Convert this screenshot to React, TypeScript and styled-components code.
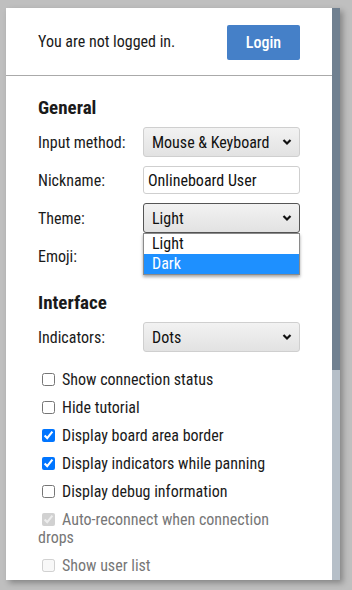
import * as React from 'react';
import styled, { createGlobalStyle } from 'styled-components';

const GlobalStyle = createGlobalStyle`
	html, body {
		margin: 0;
		padding: 0;
		background-color: #bfbfbf;
	}
	body {
		font-family: "Roboto Condensed", "Liberation Sans Narrow", Roboto, sans-serif;
		font-stretch: condensed;
		font-size: 16px;
		color: #1a1a1a;
	}
`;

const Page = styled.div`
	width: 352px;
	height: 590px;
	padding: 8px 12px 10px 6px;
	box-sizing: border-box;
`;

const Panel = styled.div`
	display: flex;
	width: 334px;
	height: 572px;
	background-color: #ffffff;
	box-shadow: 3px 3px 6px rgba(0, 0, 0, 0.3);
`;

const Content = styled.div`
	flex: 1;
	overflow: hidden;
	position: relative;
`;

const ScrollTrack = styled.div`
	width: 8px;
	background-color: #b6bfc8;
`;

const ScrollThumb = styled.div`
	height: 362px;
	background-color: #708090;
`;

const Header = styled.div`
	display: flex;
	align-items: center;
	justify-content: space-between;
	height: 67px;
	padding: 0 32px;
	border-bottom: 1px solid #aaaaaa;
`;

const Login = styled.button`
	font-family: inherit;
	font-stretch: inherit;
	font-size: 16px;
	font-weight: 500;
	color: #ffffff;
	background-color: #4580c8;
	border: none;
	border-radius: 2px;
	width: 73px;
	height: 35px;
	margin-top: 1px;
`;

const Body = styled.div`
	padding: 19px 32px 40px;
`;

const Heading = styled.h2`
	font-size: 19px;
	font-weight: 700;
	margin: 0 0 6px;
	line-height: 26px;
`;

const Section = styled.section`
	margin-bottom: 19px;
`;

const Row = styled.div`
	display: grid;
	grid-template-columns: 105px 1fr;
	align-items: center;
	height: 30px;
	margin-bottom: 8px;
	position: relative;
`;

const Label = styled.label`
	font-size: 16px;
`;

const SelectBox = styled.div<{ $focused?: boolean }>`
	display: flex;
	align-items: center;
	justify-content: space-between;
	height: 30px;
	box-sizing: border-box;
	padding: 0 7px 0 8px;
	border: 1px solid ${p => (p.$focused ? '#555555' : '#cfcfcf')};
	border-radius: 3px;
	background: linear-gradient(#f2f2f2, #e2e2e2);
	font-size: 16px;
	color: #111111;
`;

const TextInput = styled.div`
	display: flex;
	align-items: center;
	height: 28px;
	box-sizing: border-box;
	padding: 0 4px;
	border: 1px solid #cfcfcf;
	border-radius: 3px;
	background-color: #ffffff;
	font-size: 16px;
	color: #111111;
`;

const Popup = styled.div`
	position: absolute;
	left: 105px;
	right: 0;
	top: 30px;
	z-index: 2;
	background-color: #ffffff;
	border: 1px solid #8a8a8a;
	box-shadow: 0 2px 3px rgba(0, 0, 0, 0.35);
`;

const Option = styled.div<{ $active?: boolean }>`
	height: 20px;
	line-height: 20px;
	padding: 0 8px;
	font-size: 16px;
	color: ${p => (p.$active ? '#ffffff' : '#111111')};
	background-color: ${p => (p.$active ? '#1e90ff' : 'transparent')};
`;

const CheckList = styled.div`
	margin-top: 14px;
`;

const Check = styled.label<{ $disabled?: boolean }>`
	display: block;
	font-size: 16px;
	line-height: 18px;
	padding: 5px 0;
	color: ${p => (p.$disabled ? '#777777' : '#1a1a1a')};

	input {
		margin: 0 7px 0 4px;
		width: 13px;
		height: 13px;
		vertical-align: -1px;
	}
`;

const Chevron = () => (
	<svg width="10" height="10" viewBox="0 0 10 10">
		<path d="M1.5 3 L5 6.5 L8.5 3" fill="none" stroke="#111" strokeWidth="2.2" />
	</svg>
);

const Select = ({ value, focused }: { value: string; focused?: boolean }) => (
	<SelectBox $focused={focused}>
		<span>{value}</span>
		<Chevron />
	</SelectBox>
);

const checks = [
	{ text: 'Show connection status', checked: false },
	{ text: 'Hide tutorial', checked: false },
	{ text: 'Display board area border', checked: true },
	{ text: 'Display indicators while panning', checked: true },
	{ text: 'Display debug information', checked: false },
	{ text: 'Auto-reconnect when connection drops', checked: true, disabled: true },
	{ text: 'Show user list', checked: false, disabled: true },
];

export default function App() {
	return (
		<Page>
			<GlobalStyle />
			<Panel>
				<Content>
					<Header>
						<span>You are not logged in.</span>
						<Login>Login</Login>
					</Header>
					<Body>
						<Section>
							<Heading>General</Heading>
							<Row>
								<Label>Input method:</Label>
								<Select value="Mouse &amp; Keyboard" />
							</Row>
							<Row>
								<Label>Nickname:</Label>
								<TextInput>Onlineboard User</TextInput>
							</Row>
							<Row>
								<Label>Theme:</Label>
								<Select value="Light" focused />
								<Popup>
									<Option>Light</Option>
									<Option $active>Dark</Option>
								</Popup>
							</Row>
							<Row>
								<Label>Emoji:</Label>
								<Select value="" />
							</Row>
						</Section>
						<Section>
							<Heading>Interface</Heading>
							<Row>
								<Label>Indicators:</Label>
								<Select value="Dots" />
							</Row>
							<CheckList>
								{checks.map(c => (
									<Check key={c.text} $disabled={c.disabled}>
										<input type="checkbox" defaultChecked={c.checked} disabled={c.disabled} />
										{c.text}
									</Check>
								))}
							</CheckList>
						</Section>
					</Body>
				</Content>
				<ScrollTrack>
					<ScrollThumb />
				</ScrollTrack>
			</Panel>
		</Page>
	);
}
